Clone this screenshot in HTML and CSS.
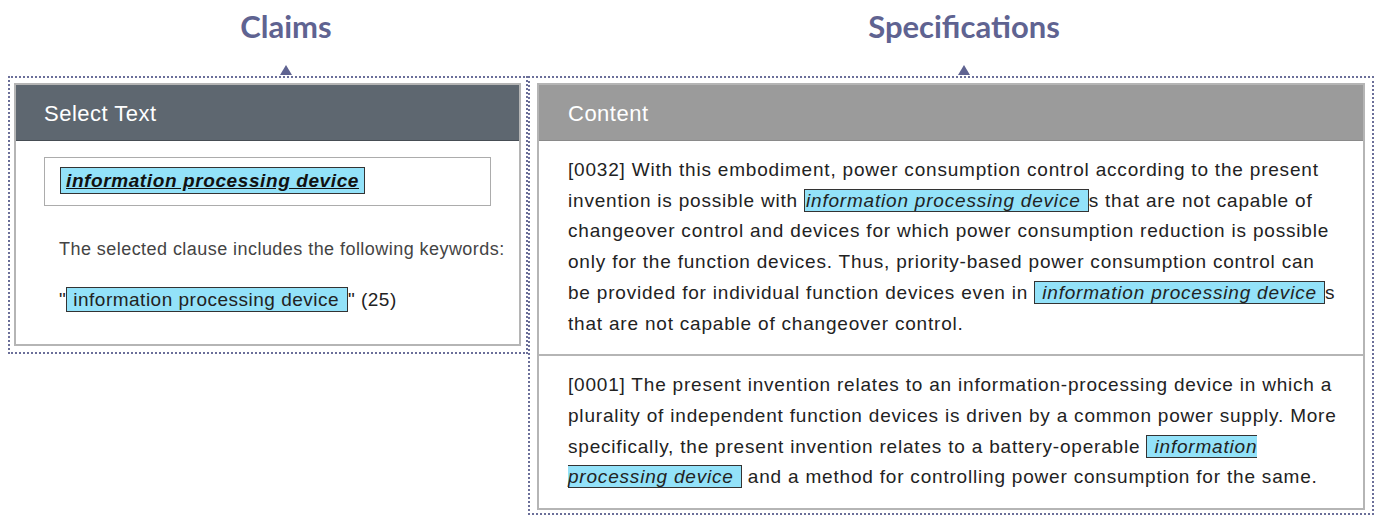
FILE: index.html
```html
<!DOCTYPE html>
<html lang="en">

<head>
    <meta charset="UTF-8">
    <meta name="viewport" content="width=device-width, initial-scale=1.0">
    <title>Claims and Specifications</title>
    <link rel="stylesheet" href="styles.css">
</head>

<body>
    <div class="wrap">
        <div class="col col-claims">
            <div class="title title-claims">
                <h2>Claims</h2>
                <span class="arrow"></span>
            </div>
            <div class="frame frame-claims">
                <div class="panel">
                    <div class="panel-head head-dark">Select Text</div>
                    <div class="claims-body">
                        <div class="input-box">
                            <span class="mark mark-bold">information processing device</span>
                        </div>
                        <p class="note">The selected clause includes the following keywords:</p>
                        <p class="keyword">"<span class="mark mark-plain">information processing device&nbsp;</span>" (25)</p>
                    </div>
                </div>
            </div>
        </div>

        <div class="col col-spec">
            <div class="title title-spec">
                <h2>Specifications</h2>
                <span class="arrow"></span>
            </div>
            <div class="frame frame-spec">
                <div class="panel">
                    <div class="panel-head head-gray">Content</div>
                    <div class="spec-item">
                        [0032] With this embodiment, power consumption control according to the present
                        invention is possible with <span class="mark">information processing device&nbsp;</span>s that are not capable of
                        changeover control and devices for which power consumption reduction is possible
                        only for the function devices. Thus, priority-based power consumption control can
                        be provided for individual function devices even in <span class="mark">&nbsp;information processing device&nbsp;</span>s
                        that are not capable of changeover control.
                    </div>
                    <div class="spec-item">
                        [0001] The present invention relates to an information-processing device in which a
                        plurality of independent function devices is driven by a common power supply. More
                        specifically, the present invention relates to a battery-operable <span class="mark">&nbsp;information
                        processing device&nbsp;</span> and a method for controlling power consumption for the same.
                    </div>
                </div>
            </div>
        </div>
    </div>
</body>

</html>
```

FILE: styles.css
```css
* {
    margin: 0;
    padding: 0;
    box-sizing: border-box;
}

body {
    background: #fff;
    font-family: "Liberation Sans", Arial, sans-serif;
    color: #222;
}

.wrap {
    display: flex;
    padding-left: 8px;
}

.col-claims {
    width: 520px;
}

.col-spec {
    width: 846px;
}

/* titles + small arrow */
.title {
    height: 76px;
    display: flex;
    flex-direction: column;
    align-items: center;
    justify-content: flex-end;
}

.title-claims {
    padding-left: 36px;
}

.title-spec {
    padding-left: 26px;
}

.title h2 {
    font-family: Lato, "Open Sans", sans-serif;
    font-weight: 700;
    font-size: 31px;
    color: #5f6391;
    line-height: 38px;
    margin-bottom: 20px;
}

.arrow {
    width: 0;
    height: 0;
    border-left: 6px solid transparent;
    border-right: 6px solid transparent;
    border-bottom: 10px solid #5f6391;
    margin-bottom: 1px;
}

/* dotted frames */
.frame {
    border: 2px dotted #6b6f99;
}

.frame-claims {
    padding: 5px 5px 6px 4px;
}

.frame-spec {
    padding: 5px 7px 3px 7px;
}

.panel {
    border: 2px solid #b5b5b5;
    background: #fff;
}

.panel-head {
    height: 56px;
    padding-left: 28px;
    color: #fff;
    font-size: 22px;
    letter-spacing: 0.5px;
    line-height: 58px;
}

.head-dark {
    background: #5e6770;
    border-bottom: 1px solid #464d54;
}

.head-gray {
    background: #9b9b9b;
    border-bottom: 1px solid #8a8a8a;
    padding-left: 29px;
}

/* highlight */
.mark {
    background: #93e2f9;
    border: 1px solid #333;
    font-style: italic;
    padding: 0 1px;
}

.mark-bold {
    font-weight: 700;
    text-decoration: underline;
    color: #111;
    letter-spacing: 0.6px;
    padding: 2px 5px;
}

.mark-plain {
    font-style: normal;
    padding: 1px 2px 1px 6px;
}

/* claims side */
.claims-body {
    padding: 16px 8px 32px 28px;
}

.input-box {
    height: 49px;
    margin-right: 20px;
    border: 1.5px solid #acacac;
    padding: 9px 0 0 15px;
    font-size: 19px;
    line-height: 28px;
}

.note {
    margin-top: 32px;
    padding-left: 15px;
    font-size: 18px;
    letter-spacing: 0.45px;
    color: #444;
    line-height: 22px;
    white-space: nowrap;
}

.keyword {
    margin-top: 28px;
    padding-left: 15px;
    font-size: 19px;
    letter-spacing: 0.5px;
    color: #222;
    line-height: 24px;
}

/* spec side */
.spec-item {
    padding: 14px 22px 15px 29px;
    font-size: 19px;
    letter-spacing: 0.8px;
    line-height: 30.7px;
}

.spec-item + .spec-item {
    border-top: 2px solid #b5b5b5;
}
```
